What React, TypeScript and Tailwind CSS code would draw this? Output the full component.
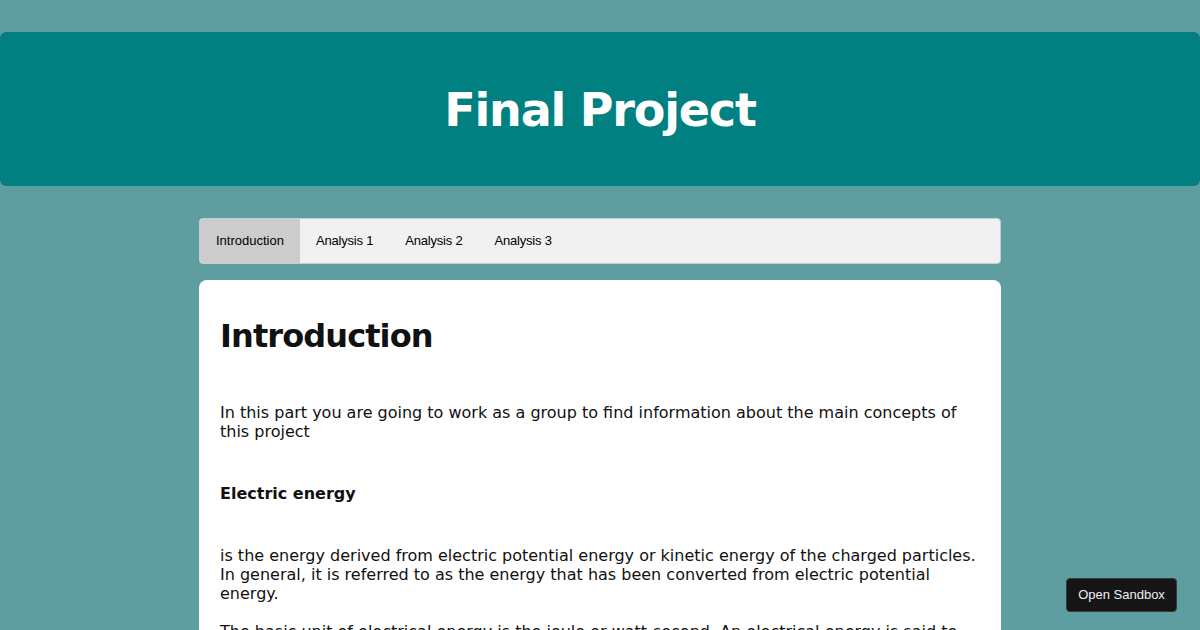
import React from "react";

const F = { fontFamily: '"DejaVu Sans", sans-serif' };

export default function App() {
  return (
    <div className="min-h-[630px] bg-[#5f9ea0] pt-[32px] relative overflow-hidden h-[630px]">
      <header className="bg-[#008080] rounded-[6px] h-[154px] flex items-center justify-center">
        <h1 className="text-white font-bold text-[46px] leading-none tracking-[-1.2px] pt-[2px]" style={F}>Final Project</h1>
      </header>
      <div className="w-[802px] mx-auto mt-[32px]">
        <div className="flex bg-[#f1f1f1] border border-[#cccccc] rounded-[4px] overflow-hidden h-[46px]">
          {["Introduction", "Analysis 1", "Analysis 2", "Analysis 3"].map((t, i) => (
            <button
              key={t}
              className={`px-[16px] text-[13px] text-black ${i === 0 ? "bg-[#cccccc]" : "tracking-[-0.2px]"}`}
              style={{ fontFamily: '"Liberation Sans", Arial, sans-serif' }}
            >
              {t}
            </button>
          ))}
        </div>
        <div className="mt-[16px] bg-white rounded-[8px] pl-[21px] pr-[20px] pt-[37px] pb-[20px] text-[#111] text-[16px] leading-[19px]" style={F}>
          <h2 className="font-bold text-[32px] leading-[39px] tracking-[-0.9px]">Introduction</h2>
          <p className="mt-[47px]">In this part you are going to work as a group to find information about the main concepts of this project</p>
          <p className="mt-[43px] font-bold">Electric energy</p>
          <p className="mt-[43px]">is the energy derived from electric potential energy or kinetic energy of the charged particles. In general, it is referred to as the energy that has been converted from electric potential energy.</p>
          <p className="mt-[19px]">The basic unit of electrical energy is the joule or watt-second. An electrical energy is said to be generated when the electric charge flows through a circuit.</p>
        </div>
      </div>
      <button
        className="fixed right-[23px] bottom-[18px] w-[111px] h-[34px] bg-[#151515] border border-[#3a3a3a] rounded-[4px] text-[13px] text-[#eeeeee]"
        style={{ fontFamily: '"Liberation Sans", Arial, sans-serif' }}
      >
        Open Sandbox
      </button>
    </div>
  );
}
